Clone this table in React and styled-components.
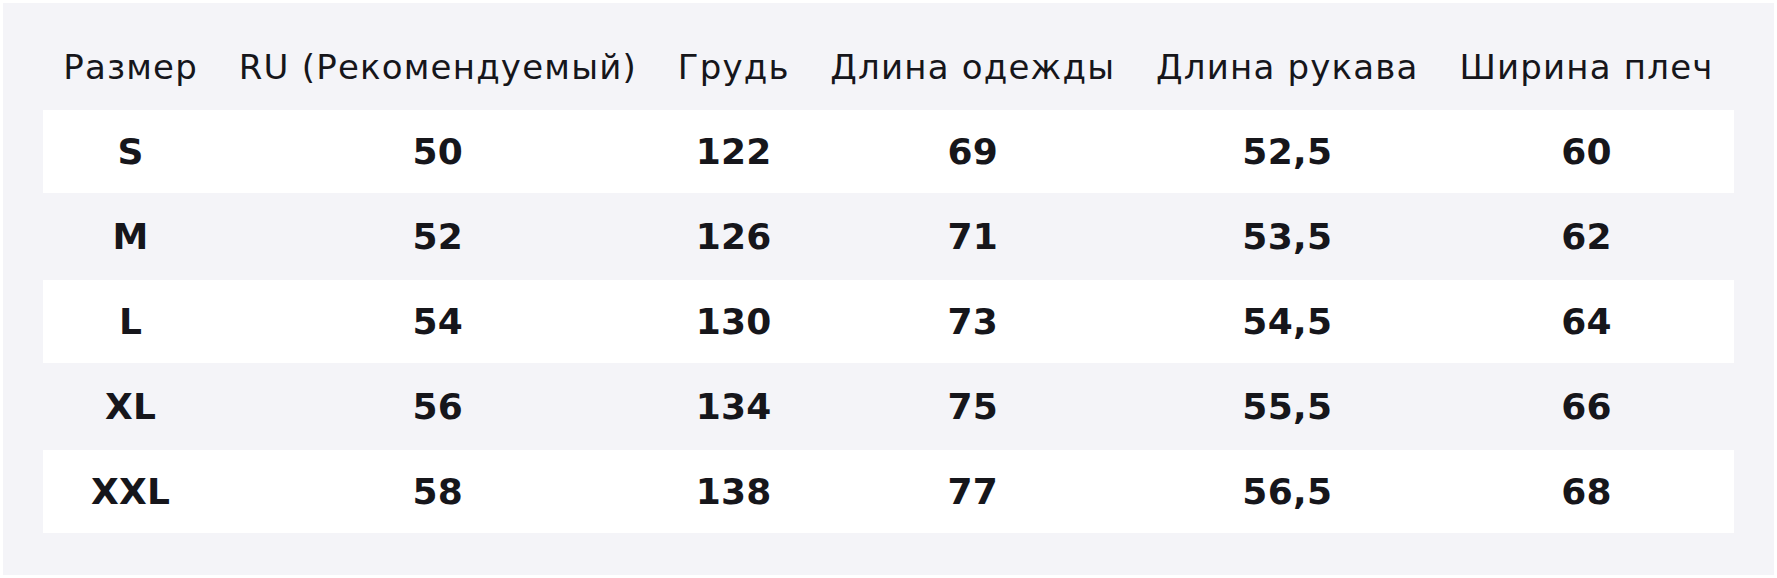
import React from "react";
import styled, { createGlobalStyle } from "styled-components";

const GlobalStyle = createGlobalStyle`
    body {
        margin: 3px;
        background: #ffffff;
        font-family: "DejaVu Sans", Verdana, sans-serif;
        color: #16161b;
    }
`;

const columns = [
    "Размер",
    "RU (Рекомендуемый)",
    "Грудь",
    "Длина одежды",
    "Длина рукава",
    "Ширина плеч",
];

const sizes = [
    ["S", "50", "122", "69", "52,5", "60"],
    ["M", "52", "126", "71", "53,5", "62"],
    ["L", "54", "130", "73", "54,5", "64"],
    ["XL", "56", "134", "75", "55,5", "66"],
    ["XXL", "58", "138", "77", "56,5", "68"],
];

const App = () => {
    return (
        <>
            <GlobalStyle />
            <Panel>
                <SizeTable>
                    <thead>
                        <tr>
                            {columns.map((c) => (
                                <HeadCell key={c}>{c}</HeadCell>
                            ))}
                        </tr>
                    </thead>
                    <tbody>
                        {sizes.map((row, i) => (
                            <Row key={row[0]} $striped={i % 2 === 0}>
                                {row.map((v, j) => (
                                    <Cell key={j}>{v}</Cell>
                                ))}
                            </Row>
                        ))}
                    </tbody>
                </SizeTable>
            </Panel>
        </>
    );
};

export default App;

const Panel = styled.div`
    background: #f4f4f8;
    padding: 40px;
    height: 572px;
    box-sizing: border-box;
`;

const SizeTable = styled.table`
    width: 100%;
    border-collapse: separate;
    border-spacing: 0 2px;
`;

const HeadCell = styled.th`
    font-weight: 400;
    font-size: 34px;
    letter-spacing: 1.2px;
    line-height: 40px;
    padding: 2px 20px 21px;
    white-space: nowrap;
    text-align: center;
    vertical-align: middle;
`;

const Row = styled.tr`
    background: ${(props) => (props.$striped ? "#ffffff" : "transparent")};
`;

const Cell = styled.td`
    height: 83px;
    padding: 0 20px;
    box-sizing: border-box;
    font-weight: 700;
    font-size: 36px;
    letter-spacing: 0.3px;
    text-align: center;
    vertical-align: middle;
    white-space: nowrap;
`;
